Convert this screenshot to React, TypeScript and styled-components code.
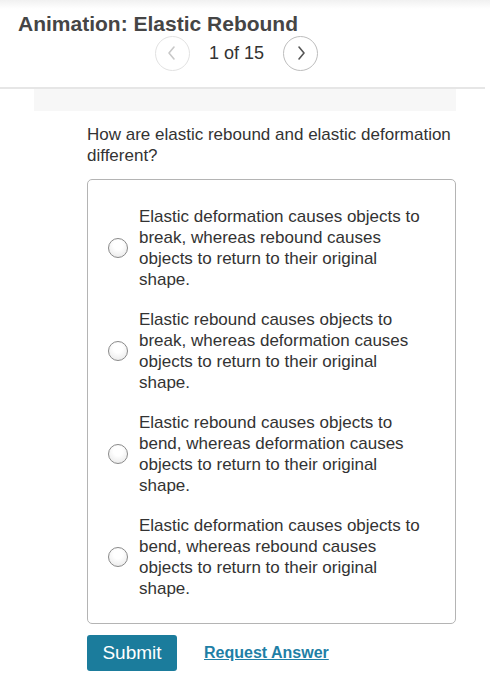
import styled, { createGlobalStyle } from "styled-components";

const GlobalStyle = createGlobalStyle`
  body {
    margin: 0;
    background: #fff;
    font-family: "Liberation Sans", Arial, sans-serif;
    color: #333;
  }
`;

const Page = styled.div`
  width: 490px;
  min-height: 700px;
  background: #fff;
`;

const TopStrip = styled.div`
  height: 9px;
  background: linear-gradient(#f1f1f1, #fff);
`;

const Title = styled.h1`
  margin: 3px 0 0 18px;
  font-size: 21px;
  line-height: 24px;
  font-weight: 700;
  color: #454545;
`;

const Nav = styled.div`
  display: flex;
  align-items: center;
  justify-content: center;
  padding-right: 17px;
  margin-top: -2px;
  height: 38px;
`;

const NavButton = styled.button<{ $disabled?: boolean }>`
  width: 35px;
  height: 35px;
  border-radius: 50%;
  border: 1px solid ${(p) => (p.$disabled ? "#e2e2e2" : "#bdbdbd")};
  background: #fff;
  display: flex;
  align-items: center;
  justify-content: center;
  padding: 0;
  color: ${(p) => (p.$disabled ? "#c8c8c8" : "#555")};
`;

const PageCount = styled.span`
  font-size: 18px;
  color: #333;
  margin: 0 19px;
`;

const Divider = styled.div`
  margin-top: 15px;
  height: 2px;
  background: #e6e6e6;
  margin-right: 5px;
`;

const Band = styled.div`
  margin: 0 34px;
  height: 22px;
  background: #f7f7f7;
`;

const Content = styled.div`
  padding: 13px 0 0 87px;
`;

const Question = styled.p`
  margin: 0;
  width: 372px;
  font-size: 17px;
  line-height: 21px;
  color: #333;
`;

const OptionBox = styled.div`
  margin-top: 13px;
  width: 367px;
  border: 1px solid #b4b4b4;
  border-radius: 5px;
  padding: 26px 0 24px;
  display: flex;
  flex-direction: column;
  gap: 19px;
`;

const Option = styled.label`
  display: flex;
  align-items: center;
  padding-left: 20px;
`;

const Radio = styled.span`
  width: 18px;
  height: 18px;
  border-radius: 50%;
  border: 1px solid #8a8a8a;
  background: radial-gradient(circle at 50% 35%, #fff 30%, #e4e4e4 100%);
  flex-shrink: 0;
`;

const OptionText = styled.span`
  margin-left: 11px;
  width: 287px;
  font-size: 17px;
  line-height: 21px;
  color: #333;
`;

const Actions = styled.div`
  display: flex;
  align-items: center;
  margin-top: 11px;
`;

const SubmitButton = styled.button`
  width: 90px;
  height: 36px;
  border: none;
  border-radius: 3px;
  background: #1b7c9c;
  color: #fff;
  font-family: "Liberation Sans", Arial, sans-serif;
  font-size: 19px;
`;

const RequestLink = styled.a`
  margin-left: 27px;
  font-size: 16px;
  font-weight: 700;
  color: #1f7fa6;
  text-decoration: underline;
`;

const Chevron = ({ dir }: { dir: "left" | "right" }) => (
  <svg width="14" height="16" viewBox="0 0 14 16" fill="none">
    <path
      d={dir === "left" ? "M9 2 L4 8 L9 14" : "M5 2 L10 8 L5 14"}
      stroke="currentColor"
      strokeWidth="1.6"
      strokeLinecap="round"
      strokeLinejoin="round"
    />
  </svg>
);

const options = [
  "Elastic deformation causes objects to break, whereas rebound causes objects to return to their original shape.",
  "Elastic rebound causes objects to break, whereas deformation causes objects to return to their original shape.",
  "Elastic rebound causes objects to bend, whereas deformation causes objects to return to their original shape.",
  "Elastic deformation causes objects to bend, whereas rebound causes objects to return to their original shape.",
];

export default function App() {
  return (
    <Page>
      <GlobalStyle />
      <TopStrip />
      <Title>Animation: Elastic Rebound</Title>
      <Nav>
        <NavButton $disabled>
          <Chevron dir="left" />
        </NavButton>
        <PageCount>1 of 15</PageCount>
        <NavButton>
          <Chevron dir="right" />
        </NavButton>
      </Nav>
      <Divider />
      <Band />
      <Content>
        <Question>How are elastic rebound and elastic deformation different?</Question>
        <OptionBox>
          {options.map((o) => (
            <Option key={o}>
              <Radio />
              <OptionText>{o}</OptionText>
            </Option>
          ))}
        </OptionBox>
        <Actions>
          <SubmitButton>Submit</SubmitButton>
          <RequestLink href="#">Request Answer</RequestLink>
        </Actions>
      </Content>
    </Page>
  );
}
